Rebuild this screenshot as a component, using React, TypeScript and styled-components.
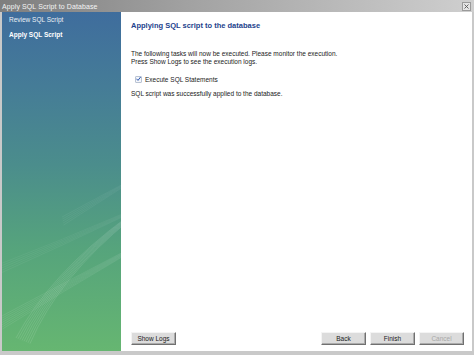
import React from "react";
import styled, { createGlobalStyle } from "styled-components";

const Global = createGlobalStyle`
  html, body { margin: 0; padding: 0; background: #ffffff; }
  body { font-family: "Liberation Sans", Arial, sans-serif; }
`;

const Window = styled.div`
  width: 474px;
  height: 355px;
  display: flex;
  flex-direction: column;
  background: #c9c9c9;
  overflow: hidden;
`;

const TitleBar = styled.div`
  height: 12px;
  display: flex;
  align-items: center;
  justify-content: space-between;
  padding: 0 3px 0 2px;
  background: linear-gradient(to right, #7e7e7e 0%, #a2a2a2 40%, #cfcfcf 100%);
  color: #f4f4f4;
  font-size: 7px;
  letter-spacing: 0.1px;
`;

const CloseBox = styled.div`
  width: 7px;
  height: 7px;
  border: 1px solid #9a9a9a;
  background: #e4e4e4;
  display: flex;
  align-items: center;
  justify-content: center;
`;

const Body = styled.div`
  flex: 1;
  display: flex;
  padding: 0 2px 4px 2px;
`;

const Sidebar = styled.div`
  position: relative;
  width: 119px;
  flex: none;
  display: flex;
  flex-direction: column;
  gap: 8px;
  padding: 4px 0 0 7px;
  box-sizing: border-box;
  background: linear-gradient(
    to bottom,
    #3f6d9d 0%,
    #457c97 22%,
    #4b8d8c 45%,
    #56a47c 70%,
    #66b671 100%
  );
  overflow: hidden;
`;

const Waves = styled.svg`
  position: absolute;
  left: 0;
  top: 0;
  width: 119px;
  height: 339px;
  pointer-events: none;
`;

const StepItem = styled.div<{ $active?: boolean }>`
  position: relative;
  color: #ffffff;
  font-size: 6.5px;
  font-weight: ${(p) => (p.$active ? 700 : 400)};
  opacity: ${(p) => (p.$active ? 1 : 0.9)};
`;

const Content = styled.div`
  flex: 1;
  display: flex;
  flex-direction: column;
  background: #ffffff;
  padding: 9px 8px 6px 10px;
`;

const Heading = styled.div`
  color: #233f8c;
  font-size: 7.5px;
  font-weight: 700;
  height: 9px;
  line-height: 9px;
`;

const Text = styled.div`
  color: #222222;
  font-size: 6.5px;
  line-height: 8px;
`;

const Intro = styled(Text)`
  margin-top: 20px;
`;

const CheckRow = styled.div`
  display: flex;
  align-items: center;
  gap: 3px;
  margin: 9px 0 0 4px;
  color: #222222;
  font-size: 6.5px;
  height: 8px;
`;

const CheckBox = styled.div`
  width: 7px;
  height: 7px;
  box-sizing: border-box;
  border: 1px solid #b9c3d3;
  border-radius: 1px;
  background: #f4f6fa;
  display: flex;
  align-items: center;
  justify-content: center;
`;

const Success = styled(Text)`
  margin-top: 7px;
`;

const Spacer = styled.div`
  flex: 1;
`;

const Footer = styled.div`
  display: flex;
  align-items: center;
  gap: 4px;
`;

const Button = styled.div<{ $disabled?: boolean }>`
  width: 45px;
  height: 13px;
  box-sizing: border-box;
  display: flex;
  align-items: center;
  justify-content: center;
  font-size: 6.5px;
  color: ${(p) => (p.$disabled ? "#a8a8a8" : "#1a1a1a")};
  background: #dcdcdc;
  border-top: 1px solid #f4f4f4;
  border-left: 1px solid #f4f4f4;
  border-right: 1px solid #707070;
  border-bottom: 1px solid #707070;
  box-shadow: inset -1px -1px 0 #ababab;
`;

const Grow = styled.div`
  flex: 1;
`;

function WaveLines() {
  const bundle = (
    x1: number,
    y1: number,
    cx: number,
    cy: number,
    x2: number,
    y2: number,
    n: number,
    dx: number,
    dy: number,
    op: number
  ) =>
    Array.from({ length: n }).map((_, i) => (
      <path
        key={`${x1}-${y1}-${i}`}
        d={`M${x1 + i * dx} ${y1 + i * dy} Q${cx + i * dx * 0.6} ${cy + i * dy * 0.6} ${x2 + i * dx * 0.3} ${y2 + i * dy * 0.3}`}
        fill="none"
        stroke="#ffffff"
        strokeOpacity={op}
        strokeWidth={0.5}
      />
    ));
  return (
    <Waves viewBox="0 0 119 339">
      {bundle(14, 326, 48, 262, 125, 205, 8, 2, 0.8, 0.22)}
      {bundle(-2, 305, 60, 272, 125, 238, 7, 0.4, 2, 0.16)}
      {bundle(-2, 252, 60, 228, 125, 200, 5, 0.3, 2.2, 0.1)}
      {bundle(60, 205, 95, 186, 125, 170, 5, 0.4, 2, 0.1)}
    </Waves>
  );
}

export default function App() {
  return (
    <>
      <Global />
      <Window>
        <TitleBar>
          <span>Apply SQL Script to Database</span>
          <CloseBox>
            <svg width="5" height="5" viewBox="0 0 5 5">
              <path d="M0.5 0.5 L4.5 4.5 M4.5 0.5 L0.5 4.5" stroke="#555" strokeWidth="0.9" />
            </svg>
          </CloseBox>
        </TitleBar>
        <Body>
          <Sidebar>
            <WaveLines />
            <StepItem>Review SQL Script</StepItem>
            <StepItem $active>Apply SQL Script</StepItem>
          </Sidebar>
          <Content>
            <Heading>Applying SQL script to the database</Heading>
            <Intro>
              The following tasks will now be executed. Please monitor the execution.
              <br />
              Press Show Logs to see the execution logs.
            </Intro>
            <CheckRow>
              <CheckBox>
                <svg width="6" height="6" viewBox="0 0 6 6">
                  <path
                    d="M0.8 3 L2.4 4.7 L5.3 0.9"
                    fill="none"
                    stroke="#2a56b0"
                    strokeWidth="1.2"
                    strokeLinecap="round"
                    strokeLinejoin="round"
                  />
                </svg>
              </CheckBox>
              <span>Execute SQL Statements</span>
            </CheckRow>
            <Success>SQL script was successfully applied to the database.</Success>
            <Spacer />
            <Footer>
              <Button>Show Logs</Button>
              <Grow />
              <Button>Back</Button>
              <Button>Finish</Button>
              <Button $disabled>Cancel</Button>
            </Footer>
          </Content>
        </Body>
      </Window>
    </>
  );
}
